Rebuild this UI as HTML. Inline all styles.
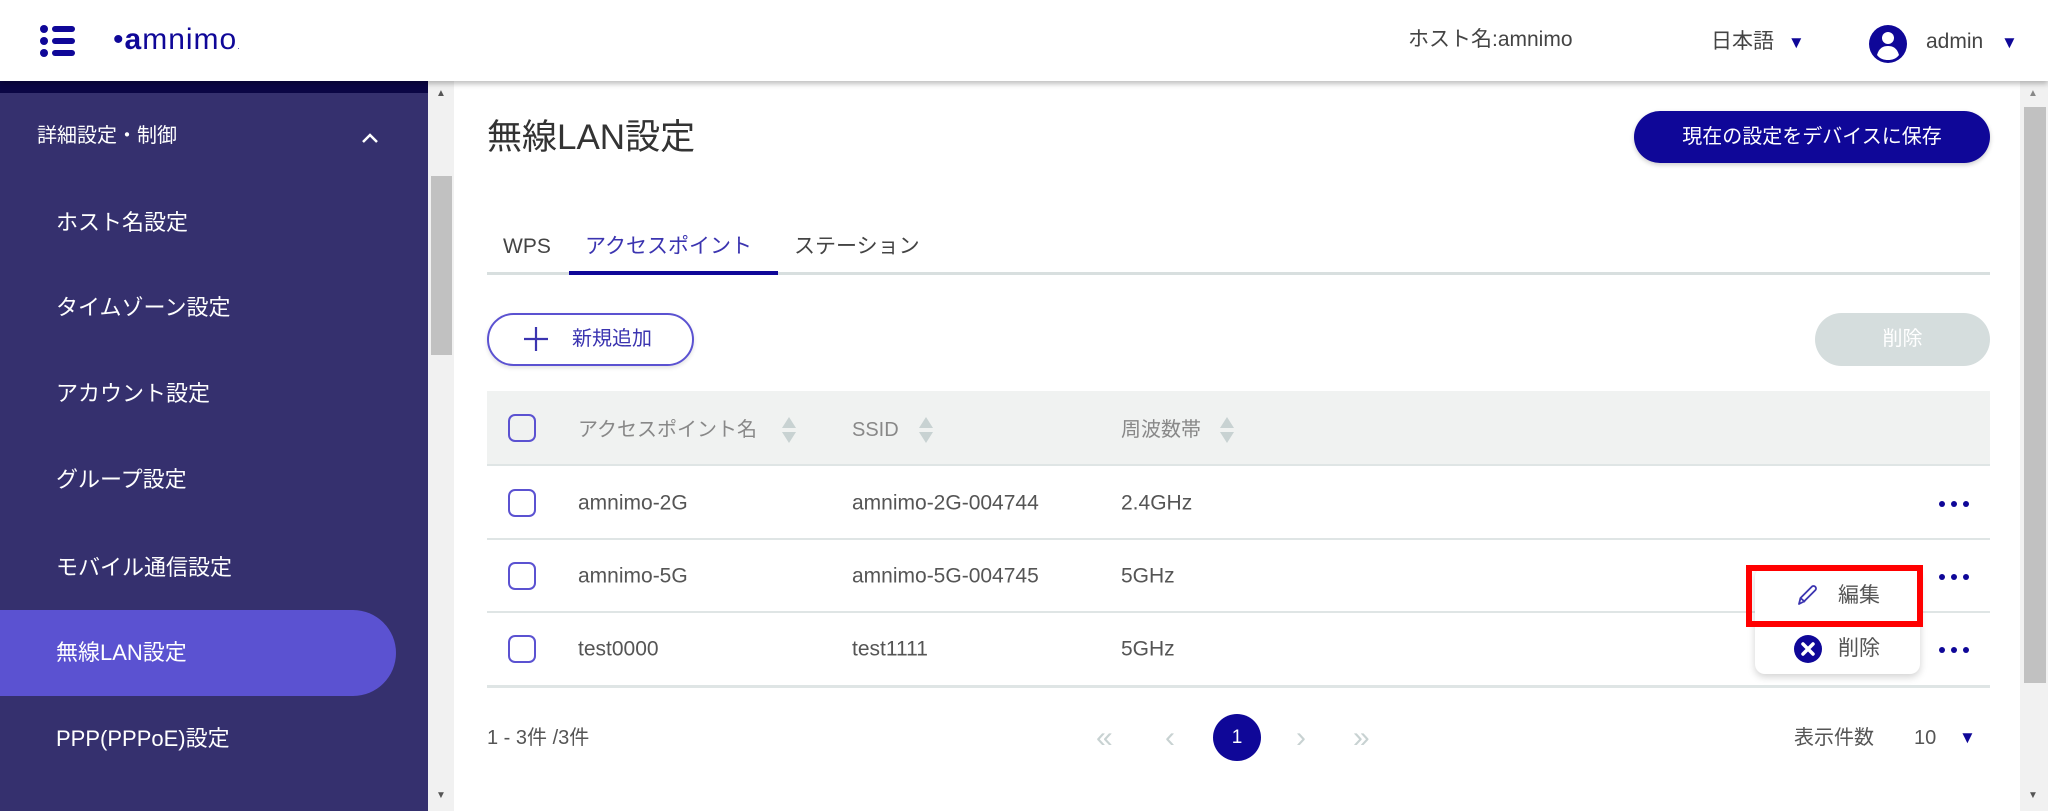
<!DOCTYPE html>
<html><head><meta charset="utf-8"><style>
*{margin:0;padding:0;box-sizing:border-box}
body{width:2048px;height:811px;overflow:hidden;background:#fff;font-family:"Liberation Sans","Noto Sans CJK JP",sans-serif;position:relative;color:#444;line-height:1.2}
.a{position:absolute;white-space:nowrap}
.hdr{left:0;top:0;width:2048px;height:81px;background:#fff;box-shadow:0 3px 5px rgba(0,0,0,.25);z-index:5}
.side{left:0;top:81px;width:428px;height:730px;background:#35306e}
.mi{color:#fff;font-size:22px;left:56px;transform:translateY(-50%)}
.tx{font-size:21px;color:#555;transform:translateY(-50%)}
.cb{width:28px;height:28px;border:2px solid #5b52d1;border-radius:7px;left:508px;transform:translateY(-50%)}
.dots{left:1939px;width:30px;height:6px;transform:translateY(-50%)}
.dots i{display:inline-block;width:6px;height:6px;border-radius:3px;background:#0f0798;margin-right:6px;vertical-align:top}
.line{left:487px;width:1503px;height:2px;background:#dfe5e5}
</style></head><body>
<div class="a hdr">
 <svg class="a" style="left:40px;top:25px" width="35" height="32" viewBox="0 0 35 32"><g fill="#0f0798"><circle cx="4" cy="4" r="4"/><circle cx="4" cy="16" r="4"/><circle cx="4" cy="28" r="4"/><rect x="12" y="1" width="23" height="6" rx="3"/><rect x="12" y="13" width="23" height="6" rx="3"/><rect x="12" y="25" width="23" height="6" rx="3"/></g></svg>
 <div class="a" style="left:113px;top:22px;font-size:30px;color:#0f0798;letter-spacing:1px">•<span style="font-weight:bold">a</span>mnimo<span style="font-size:8px">.</span></div>
 <div class="a" style="left:1408px;top:27px;font-size:21px;color:#444">ホスト名:amnimo</div>
 <div class="a" style="left:1711px;top:29px;font-size:21px;color:#444">日本語 <span style="color:#0f0798;font-size:17px;margin-left:8px">▼</span></div>
 <svg class="a" style="left:1868px;top:24px" width="40" height="40" viewBox="0 0 40 40"><circle cx="20" cy="20" r="19" fill="#0f0798"/><circle cx="20" cy="14" r="6" fill="#fff"/><path d="M9 31c2-7 6-9 11-9s9 2 11 9c-3 4-7 5-11 5s-8-1-11-5z" fill="#fff"/></svg>
 <div class="a" style="left:1926px;top:29px;font-size:21px;color:#444">admin <span style="color:#0f0798;font-size:17px;margin-left:12px">▼</span></div>
</div>
<div class="a side">
 <div class="a" style="left:0;top:0;width:428px;height:12px;background:#0b0645"></div>
</div>
<div class="a mi" style="left:37px;top:136px;font-size:20px">詳細設定・制御</div>
<svg class="a" style="left:361px;top:132px" width="18" height="12" viewBox="0 0 18 12"><path d="M2 10L9 3l7 7" stroke="#fff" stroke-width="2.5" fill="none"/></svg>
<div class="a mi" style="top:223px">ホスト名設定</div>
<div class="a mi" style="top:308px">タイムゾーン設定</div>
<div class="a mi" style="top:394px">アカウント設定</div>
<div class="a mi" style="top:480px">グループ設定</div>
<div class="a mi" style="top:568px">モバイル通信設定</div>
<div class="a" style="left:0;top:610px;width:396px;height:86px;background:#5b52d1;border-radius:0 43px 43px 0"></div>
<div class="a mi" style="top:653px">無線LAN設定</div>
<div class="a mi" style="top:739px">PPP(PPPoE)設定</div>
<div class="a" style="left:428px;top:81px;width:26px;height:730px;background:#f1f1f1"></div>
<div class="a" style="left:431px;top:176px;width:21px;height:179px;background:#c1c1c1"></div>
<div class="a" style="left:436px;top:88px;font-size:10px;color:#555">▲</div>
<div class="a" style="left:436px;top:790px;font-size:10px;color:#555">▼</div>
<div class="a" style="left:2020px;top:81px;width:28px;height:730px;background:#f1f1f1"></div>
<div class="a" style="left:2024px;top:107px;width:22px;height:576px;background:#c1c1c1"></div>
<div class="a" style="left:2028px;top:88px;font-size:10px;color:#888">▲</div>
<div class="a" style="left:2028px;top:790px;font-size:10px;color:#555">▼</div>

<div class="a" style="left:487px;top:117px;font-size:35px;color:#333">無線LAN設定</div>
<div class="a" style="left:1634px;top:111px;width:356px;height:52px;background:#0f0798;border-radius:26px;color:#fff;font-size:20px;text-align:center;line-height:52px;box-shadow:0 2px 5px rgba(0,0,0,.2)">現在の設定をデバイスに保存</div>

<div class="a" style="left:503px;top:234px;font-size:21px;color:#444">WPS</div>
<div class="a" style="left:585px;top:234px;font-size:21px;color:#3b34b0">アクセスポイント</div>
<div class="a" style="left:794px;top:234px;font-size:21px;color:#444">ステーション</div>
<div class="a" style="left:487px;top:272px;width:1503px;height:3px;background:#d8dfdf"></div>
<div class="a" style="left:569px;top:271px;width:209px;height:4px;background:#0f0798"></div>

<div class="a" style="left:487px;top:313px;width:207px;height:53px;border:2px solid #5b52d1;border-radius:27px;box-shadow:0 2px 4px rgba(0,0,0,.12)"></div>
<svg class="a" style="left:523px;top:326px" width="26" height="26" viewBox="0 0 26 26"><path d="M13 1v24M1 13h24" stroke="#3b34b0" stroke-width="2.2"/></svg>
<div class="a" style="left:572px;top:327px;font-size:20px;color:#3b34b0">新規追加</div>
<div class="a" style="left:1815px;top:313px;width:175px;height:53px;background:#d5dddd;border-radius:27px;color:#fff;font-size:20px;text-align:center;line-height:53px">削除</div>

<div class="a" style="left:487px;top:391px;width:1503px;height:74px;background:#f0f2f1"></div>
<div class="a line" style="top:464px"></div>
<div class="a line" style="top:538px"></div>
<div class="a line" style="top:611px"></div>
<div class="a line" style="top:685px;height:3px"></div>
<div class="a cb" style="top:428px"></div>
<div class="a cb" style="top:503px"></div>
<div class="a cb" style="top:576px"></div>
<div class="a cb" style="top:649px"></div>
<div class="a tx" style="left:578px;top:430px;color:#888;font-size:20px">アクセスポイント名</div>
<div class="a tx" style="left:852px;top:430px;color:#888;font-size:20px">SSID</div>
<div class="a tx" style="left:1121px;top:430px;color:#888;font-size:20px">周波数帯</div>
<svg class="a" style="left:781px;top:417px" width="16" height="26" viewBox="0 0 16 26"><path d="M8 0L15 11H1zM8 26L1 15h14z" fill="#c8d2d2"/></svg>
<svg class="a" style="left:918px;top:417px" width="16" height="26" viewBox="0 0 16 26"><path d="M8 0L15 11H1zM8 26L1 15h14z" fill="#c8d2d2"/></svg>
<svg class="a" style="left:1219px;top:417px" width="16" height="26" viewBox="0 0 16 26"><path d="M8 0L15 11H1zM8 26L1 15h14z" fill="#c8d2d2"/></svg>
<div class="a tx" style="left:578px;top:503px">amnimo-2G</div>
<div class="a tx" style="left:852px;top:503px">amnimo-2G-004744</div>
<div class="a tx" style="left:1121px;top:503px">2.4GHz</div>
<div class="a tx" style="left:578px;top:576px">amnimo-5G</div>
<div class="a tx" style="left:852px;top:576px">amnimo-5G-004745</div>
<div class="a tx" style="left:1121px;top:576px">5GHz</div>
<div class="a tx" style="left:578px;top:649px">test0000</div>
<div class="a tx" style="left:852px;top:649px">test1111</div>
<div class="a tx" style="left:1121px;top:649px">5GHz</div>
<div class="a dots" style="top:504px"><i></i><i></i><i></i></div>
<div class="a dots" style="top:577px"><i></i><i></i><i></i></div>
<div class="a dots" style="top:650px"><i></i><i></i><i></i></div>

<div class="a" style="left:1755px;top:567px;width:165px;height:107px;background:#fff;border-radius:10px;box-shadow:0 3px 8px rgba(0,0,0,.18)"></div>
<div class="a" style="left:1746px;top:565px;width:177px;height:62px;border:6px solid #ff0000"></div>
<svg class="a" style="left:1796px;top:583px" width="24" height="24" viewBox="0 0 24 24"><path d="M3 21l1.5-6L16 3.5a2.5 2.5 0 013.5 3.5L8 18.5zM4.5 15l4.5 4" stroke="#3b34b0" stroke-width="1.8" fill="none" stroke-linejoin="round"/></svg>
<div class="a" style="left:1838px;top:583px;font-size:21px;color:#555">編集</div>
<svg class="a" style="left:1794px;top:635px" width="28" height="28" viewBox="0 0 28 28"><circle cx="14" cy="14" r="14" fill="#0f0798"/><path d="M9 9l10 10M19 9L9 19" stroke="#fff" stroke-width="3.5" stroke-linecap="round"/></svg>
<div class="a" style="left:1838px;top:636px;font-size:21px;color:#555">削除</div>

<div class="a" style="left:487px;top:726px;font-size:20px;color:#555">1 - 3件 /3件</div>
<div class="a" style="left:1096px;top:720px;font-size:30px;color:#c8d2d2">«</div>
<div class="a" style="left:1165px;top:720px;font-size:30px;color:#c8d2d2">‹</div>
<div class="a" style="left:1213px;top:714px;width:48px;height:47px;border-radius:50%;background:#0f0798;color:#fff;font-size:19px;text-align:center;line-height:47px">1</div>
<div class="a" style="left:1296px;top:720px;font-size:30px;color:#c8d2d2">›</div>
<div class="a" style="left:1353px;top:720px;font-size:30px;color:#c8d2d2">»</div>
<div class="a" style="left:1794px;top:726px;font-size:20px;color:#555">表示件数</div>
<div class="a" style="left:1914px;top:726px;font-size:20px;color:#555">10</div>
<div class="a" style="left:1959px;top:728px;font-size:17px;color:#0f0798">▼</div>
</body></html>
